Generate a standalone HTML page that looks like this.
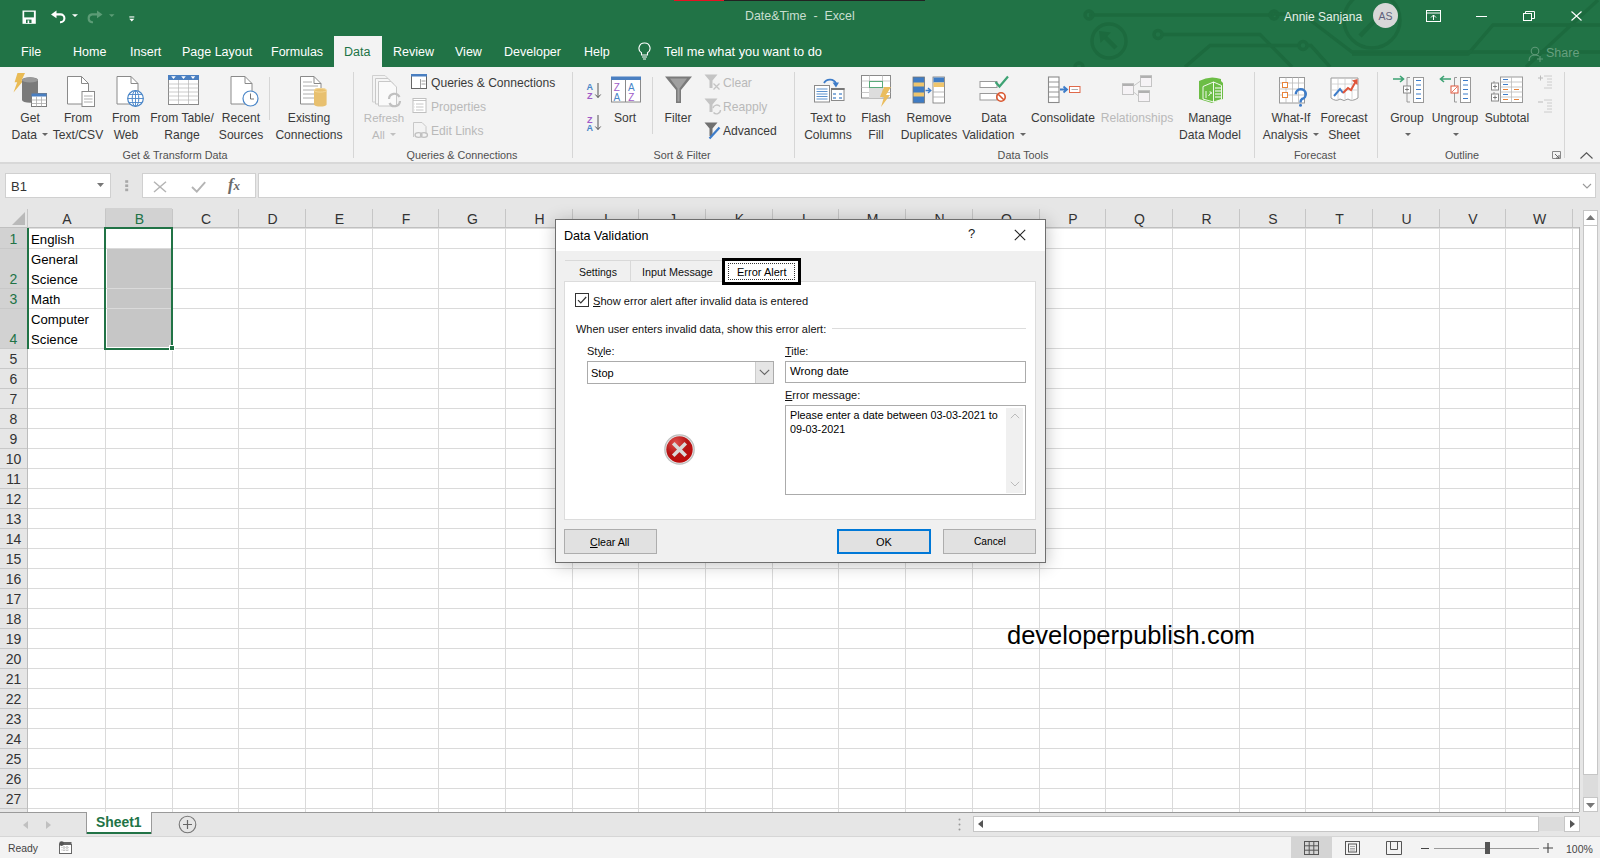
<!DOCTYPE html>
<html><head><meta charset="utf-8">
<style>
*{margin:0;padding:0;box-sizing:border-box}
html,body{width:1600px;height:858px;overflow:hidden;background:#fff;font-family:"Liberation Sans",sans-serif;position:relative}
.a{position:absolute}
#title{left:0;top:0;width:1600px;height:67px;background:#217346}
.tt{color:#fff;font-size:12.5px;white-space:nowrap;line-height:15px}
.rt{color:#3a3a3a;font-size:12.1px;white-space:nowrap;line-height:16.6px}
.rg{color:#b9b9b9}
.gl{color:#505050;font-size:10.8px;white-space:nowrap;line-height:14px}
.sep{width:1px;background:#d6d6d6}
.ch{font-size:14px;color:#333;text-align:center;line-height:20px}
.rh{font-size:14px;color:#333;text-align:right;line-height:20px}
.cell{font-size:13.2px;color:#000;line-height:20px}
.dt{font-family:"Liberation Sans",sans-serif;white-space:nowrap}
.dd{display:inline-block;width:0;height:0;border-left:3px solid transparent;border-right:3px solid transparent;border-top:3px solid #666;vertical-align:middle;margin-left:2px;position:relative;top:-1px}
.dd.g{border-top-color:#c0c0c0}
</style></head>
<body>
<!-- TITLE BAR -->
<div id="title" class="a">
<svg class="a" style="left:0;top:0" width="1600" height="67" viewBox="0 0 1600 67">
 <g stroke="#1c6a3e" stroke-width="3.4" fill="none">
  <line x1="1089" y1="15" x2="1274" y2="15"/><circle cx="1089" cy="15" r="4"/><circle cx="1274" cy="15" r="4"/>
  <circle cx="1109" cy="41" r="17"/><path d="M1103 35 L1116 48" stroke-width="4.5"/><path d="M1099 31 L1111 32.5 L1100.5 43z" fill="#1c6a3e" stroke="none"/>
  <path d="M1161 34.5 L1260 34.5 L1292 67"/><circle cx="1158" cy="34.5" r="4"/>
  <path d="M1185 67 L1210 45.5 L1300 45.5"/><circle cx="1303" cy="45.5" r="4"/>
  <path d="M1307 45.5 L1311 45.5 L1330 67"/>
  <circle cx="1079" cy="67" r="4"/>
  <path d="M1310 20 L1352 52 L1600 52"/>
  <circle cx="1372" cy="20" r="28"/><path d="M1360 36 L1381 14" stroke-width="4.5"/><path d="M1388 7 L1386 20 L1375 9z" fill="#1c6a3e" stroke="none"/>
  <path d="M1274 14 L1345 14" />
  <path d="M1600 25 L1493 25 L1468 54 L1352 54"/>
  <path d="M1598 0 L1526 67"/>
 </g>
</svg>
<div class="a" style="left:674px;top:0;width:50px;height:1px;background:#e81123"></div>
<div class="a" style="left:724px;top:0;width:201px;height:1px;background:#222"></div>
<!-- save -->
<svg class="a" style="left:22px;top:9.5px" width="15" height="15" viewBox="0 0 15 15"><path d="M0.5 0.5H13.8V13.8H0.5z" fill="#fff"/><rect x="2.2" y="1.8" width="9.7" height="5.6" fill="#217346"/><rect x="4" y="9.6" width="5.5" height="3.4" fill="#217346"/><rect x="5.6" y="10.4" width="1.6" height="3" fill="#fff"/></svg>
<!-- undo -->
<svg class="a" style="left:50px;top:9px" width="18" height="15" viewBox="0 0 18 15"><path d="M1 5.4L6.5 1.5V9.3z" fill="#fff"/><path d="M5.5 5.4H10.5A3.9 3.9 0 0 1 10.5 13.2H10" fill="none" stroke="#fff" stroke-width="2.1"/></svg>
<svg class="a" style="left:72px;top:14px" width="6" height="4"><path d="M0 0.3h6l-3 2.8z" fill="#fff"/></svg>
<svg class="a" style="left:86px;top:9px" width="18" height="15" viewBox="0 0 18 15"><path d="M16.5 5.4L11 1.5V9.3z" fill="#5c9c76"/><path d="M12 5.4H6A4 4 0 0 0 6 13.3H7" fill="none" stroke="#5c9c76" stroke-width="2.1"/></svg>
<svg class="a" style="left:108.5px;top:14px" width="6" height="4"><path d="M0 0.3h5.5l-2.75 2.8z" fill="#5c9c76"/></svg>
<svg class="a" style="left:128.5px;top:15.5px" width="6" height="6"><rect x="0.3" y="0.4" width="5" height="1.1" fill="#fff"/><path d="M0.3 2.7h5L2.8 5.6z" fill="#fff"/></svg>
<div class="a tt" style="left:745px;top:9px;font-size:12.4px;color:#c8dfd0">Date&amp;Time&nbsp; - &nbsp;Excel</div>
<div class="a tt" style="left:1284px;top:10px;font-size:12px;color:#e4efe8">Annie Sanjana</div>
<div class="a" style="left:1373px;top:3px;width:25px;height:25px;border-radius:50%;background:#d8d8d8;color:#5f5f7a;font-size:10.5px;line-height:27px;text-align:center">AS</div>
<svg class="a" style="left:1426px;top:10px" width="15" height="12" viewBox="0 0 15 12"><rect x="0.5" y="0.5" width="14" height="11" fill="none" stroke="#fff"/><line x1="0.5" y1="3" x2="14.5" y2="3" stroke="#fff"/><path d="M7.5 10 V5 M5 7.5 L7.5 5 L10 7.5" fill="none" stroke="#fff"/></svg>
<div class="a" style="left:1476px;top:16px;width:11px;height:1px;background:#fff"></div>
<svg class="a" style="left:1523px;top:11px" width="12" height="10" viewBox="0 0 12 10"><rect x="0.5" y="2.5" width="8" height="7" fill="none" stroke="#fff"/><path d="M2.5 2.5 V0.5 H11.5 V7.5 H8.5" fill="none" stroke="#fff"/></svg>
<svg class="a" style="left:1571px;top:11px" width="11" height="10" viewBox="0 0 11 10"><path d="M0.5 0.5 L10.5 9.5 M10.5 0.5 L0.5 9.5" stroke="#fff" stroke-width="1.1"/></svg>
<!-- tabs -->
<div class="a tt" style="left:21px;top:45px">File</div>
<div class="a tt" style="left:73px;top:45px">Home</div>
<div class="a tt" style="left:130px;top:45px">Insert</div>
<div class="a tt" style="left:182px;top:45px">Page Layout</div>
<div class="a tt" style="left:271px;top:45px">Formulas</div>
<div class="a" style="left:334px;top:36px;width:48px;height:32px;background:#f3f3f3"></div>
<div class="a tt" style="left:344px;top:45px;color:#217346">Data</div>
<div class="a tt" style="left:393px;top:45px">Review</div>
<div class="a tt" style="left:455px;top:45px">View</div>
<div class="a tt" style="left:504px;top:45px">Developer</div>
<div class="a tt" style="left:584px;top:45px">Help</div>
<svg class="a" style="left:638px;top:42px" width="13" height="18" viewBox="0 0 13 18"><path d="M6.5 1 A5.3 5.3 0 0 1 9.5 10.8 V13 H3.5 V10.8 A5.3 5.3 0 0 1 6.5 1z" fill="none" stroke="#fff" stroke-width="1.1"/><line x1="4" y1="15" x2="9" y2="15" stroke="#fff"/><line x1="5" y1="17" x2="8" y2="17" stroke="#fff"/></svg>
<div class="a tt" style="left:664px;top:44px;font-size:12.8px">Tell me what you want to do</div>
<svg class="a" style="left:1528px;top:46px" width="16" height="16" viewBox="0 0 16 16"><circle cx="7" cy="5" r="3.8" fill="none" stroke="#5f9a78" stroke-width="1.1"/><path d="M1 15 C1 10 4 9 7 9 C9 9 10 9.5 11 10" fill="none" stroke="#5f9a78" stroke-width="1.1"/><path d="M12 10 V16 M9 13 H15" stroke="#5f9a78" stroke-width="1.1"/></svg>
<div class="a tt" style="left:1546px;top:46px;color:#67a07f">Share</div>
</div>

<!-- RIBBON -->
<div class="a" style="left:0;top:67px;width:1600px;height:95px;background:#f3f3f3"></div>
<div class="a" style="left:0;top:162px;width:1600px;height:2px;background:#d8d8d8"></div>
<!-- separators -->
<div class="a sep" style="left:353px;top:72px;height:86px"></div>
<div class="a sep" style="left:572px;top:72px;height:86px"></div>
<div class="a sep" style="left:794px;top:72px;height:86px"></div>
<div class="a sep" style="left:1254px;top:72px;height:86px"></div>
<div class="a sep" style="left:1377px;top:72px;height:86px"></div>
<div class="a sep" style="left:1564px;top:72px;height:86px"></div>
<div class="a sep" style="left:269px;top:77px;height:43px"></div>
<div class="a sep" style="left:652px;top:77px;height:57px"></div>
<!-- labels -->
<div class="a rt" style="left:-10px;top:110px;width:80px;text-align:center">Get<br>Data <i class="dd"></i></div>
<div class="a rt" style="left:38px;top:110px;width:80px;text-align:center">From<br>Text/CSV</div>
<div class="a rt" style="left:86px;top:110px;width:80px;text-align:center">From<br>Web</div>
<div class="a rt" style="left:142px;top:110px;width:80px;text-align:center">From Table/<br>Range</div>
<div class="a rt" style="left:201px;top:110px;width:80px;text-align:center">Recent<br>Sources</div>
<div class="a rt" style="left:269px;top:110px;width:80px;text-align:center">Existing<br>Connections</div>
<div class="a rt rg" style="left:344px;top:110px;width:80px;text-align:center;font-size:11.5px">Refresh<br>All <i class="dd g"></i></div>
<div class="a rt" style="left:431px;top:75px">Queries &amp; Connections</div>
<div class="a rt rg" style="left:431px;top:99px">Properties</div>
<div class="a rt rg" style="left:431px;top:123px">Edit Links</div>
<div class="a rt" style="left:585px;top:110px;width:80px;text-align:center">Sort</div>
<div class="a rt" style="left:638px;top:110px;width:80px;text-align:center">Filter</div>
<div class="a rt rg" style="left:723px;top:75px">Clear</div>
<div class="a rt rg" style="left:723px;top:99px">Reapply</div>
<div class="a rt" style="left:723px;top:123px">Advanced</div>
<div class="a rt" style="left:788px;top:110px;width:80px;text-align:center">Text to<br>Columns</div>
<div class="a rt" style="left:836px;top:110px;width:80px;text-align:center">Flash<br>Fill</div>
<div class="a rt" style="left:889px;top:110px;width:80px;text-align:center">Remove<br>Duplicates</div>
<div class="a rt" style="left:954px;top:110px;width:80px;text-align:center">Data<br>Validation <i class="dd"></i></div>
<div class="a rt" style="left:1023px;top:110px;width:80px;text-align:center">Consolidate</div>
<div class="a rt rg" style="left:1097px;top:110px;width:80px;text-align:center">Relationships</div>
<div class="a rt" style="left:1170px;top:110px;width:80px;text-align:center">Manage<br>Data Model</div>
<div class="a rt" style="left:1251px;top:110px;width:80px;text-align:center">What-If<br>Analysis <i class="dd"></i></div>
<div class="a rt" style="left:1304px;top:110px;width:80px;text-align:center">Forecast<br>Sheet</div>
<div class="a rt" style="left:1367px;top:110px;width:80px;text-align:center">Group<br><i class="dd"></i></div>
<div class="a rt" style="left:1415px;top:110px;width:80px;text-align:center">Ungroup<br><i class="dd"></i></div>
<div class="a rt" style="left:1467px;top:110px;width:80px;text-align:center">Subtotal</div>
<!-- group labels -->
<div class="a gl" style="left:95px;top:148px;width:160px;text-align:center">Get &amp; Transform Data</div>
<div class="a gl" style="left:382px;top:148px;width:160px;text-align:center">Queries &amp; Connections</div>
<div class="a gl" style="left:602px;top:148px;width:160px;text-align:center">Sort &amp; Filter</div>
<div class="a gl" style="left:943px;top:148px;width:160px;text-align:center">Data Tools</div>
<div class="a gl" style="left:1235px;top:148px;width:160px;text-align:center">Forecast</div>
<div class="a gl" style="left:1382px;top:148px;width:160px;text-align:center">Outline</div>
<svg class="a" style="left:1552px;top:151px" width="9" height="8" viewBox="0 0 9 8"><path d="M0.5 7.5V0.5H8.5V7.5z" fill="none" stroke="#888" stroke-width="1"/><path d="M3 3L7 7M7 4V7H4" fill="none" stroke="#666"/></svg>
<svg class="a" style="left:1580px;top:152px" width="13" height="7" viewBox="0 0 13 7"><path d="M0.5 6.5L6.5 0.8L12.5 6.5" fill="none" stroke="#555" stroke-width="1.1"/></svg>

<!-- RIBBON ICONS -->
<svg class="a" style="left:0;top:67px" width="1600" height="80" viewBox="0 67 1600 80">
 <!-- Get Data -->
 <path d="M17.5 73H25L21.5 80.5H23.5L13.5 92.5L17.2 82.3H14.6z" fill="#e9bb55"/>
 <path d="M22 80 A8 2.8 0 0 1 38 80 V100 A8 2.8 0 0 1 22 100z" fill="#7a7a7a"/>
 <ellipse cx="30" cy="80" rx="8" ry="2.5" fill="#9a9a9a"/>
 <rect x="31.5" y="93.5" width="15" height="13" fill="#fff" stroke="#7a7a7a"/>
 <rect x="31.5" y="93.5" width="15" height="3" fill="#4a7fc1"/>
 <path d="M36.5 96.5V106.5M41.5 96.5V106.5M31.5 100H46.5M31.5 103.5H46.5" stroke="#aaa" stroke-width="0.8"/>
 <!-- From Text -->
 <path d="M67.5 76.5 H81.5 L88.5 83.5 V104 H67.5z" fill="#fff" stroke="#8a8a8a"/>
 <path d="M81.5 76.5 V83.5 H88.5" fill="none" stroke="#8a8a8a"/>
 <rect x="82" y="91.5" width="12.5" height="15" fill="#fff" stroke="#8a8a8a"/>
 <path d="M84 96H92.5M84 99H92.5M84 102H92.5" stroke="#999" stroke-width="0.8"/>
 <!-- From Web -->
 <path d="M117 76.5 H131 L138 83.5 V104 H117z" fill="#fff" stroke="#8a8a8a"/>
 <path d="M131 76.5 V83.5 H138" fill="none" stroke="#8a8a8a"/>
 <circle cx="135.5" cy="98.5" r="7.8" fill="#fff" stroke="#4a86c8" stroke-width="1.2"/>
 <ellipse cx="135.5" cy="98.5" rx="3.3" ry="7.8" fill="none" stroke="#4a86c8"/>
 <path d="M127.7 98.5H143.3M129 94.5H142M129 102.5H142M135.5 90.7V106.3" stroke="#4a86c8" stroke-width="0.9"/>
 <!-- From Table -->
 <rect x="168.5" y="75.5" width="30" height="29" fill="#fff" stroke="#8a8a8a"/>
 <rect x="168" y="75" width="31" height="5" fill="#4a7fc1"/>
 <path d="M171.2 76.3h4.6l-2.3 2.6z M181.2 76.3h4.6l-2.3 2.6z M190.7 76.3h4.6l-2.3 2.6z" fill="#fff"/>
 <path d="M178.5 80V104.5M188.5 80V104.5M168.5 84H198.5M168.5 88H198.5M168.5 92H198.5M168.5 96H198.5M168.5 100H198.5" stroke="#b4b4b4" stroke-width="0.7"/>
 <!-- Recent Sources -->
 <path d="M231 76.5 H245 L252 83.5 V104 H231z" fill="#fff" stroke="#8a8a8a"/>
 <path d="M245 76.5 V83.5 H252" fill="none" stroke="#8a8a8a"/>
 <circle cx="250.5" cy="98.5" r="7.5" fill="#fff" stroke="#4a86c8" stroke-width="1.2"/>
 <path d="M250.5 93.5V99H254" fill="none" stroke="#666" stroke-width="0.9"/>
 <!-- Existing Connections -->
 <path d="M300.5 76.5 H314 L321 83.5 V104 H300.5z" fill="#fff" stroke="#8a8a8a"/>
 <path d="M314 76.5 V83.5 H321" fill="none" stroke="#8a8a8a"/>
 <path d="M303 82H312M303 86H318M303 90H314M303 94H314M303 98H314" stroke="#999" stroke-width="0.8"/>
 <path d="M314 90 A6.3 2 0 0 1 326.6 90 V104.5 A6.3 2 0 0 1 314 104.5z" fill="#e8c06f"/><ellipse cx="320.3" cy="90.3" rx="6.3" ry="1.8" fill="none" stroke="#f6dca0" stroke-width="0.8"/>
 <!-- Refresh All -->
 <path d="M372.5 75.5H385L389 79.5V102H372.5z" fill="none" stroke="#d0d0d0"/>
 <path d="M375.5 78.5H388L393 83.5V104H375.5z" fill="#f6f6f6" stroke="#c8c8c8"/>
 <path d="M378.5 81.5H391L396.5 87V106H378.5z" fill="#fafafa" stroke="#c8c8c8"/>
 <path d="M389 99 A5.5 5.5 0 0 1 399.5 97 M400 101 A5.5 5.5 0 0 1 389.5 103" fill="none" stroke="#c0c0c0" stroke-width="2.2"/>
 <!-- Q&C icon -->
 <rect x="411.5" y="74.5" width="15" height="14" fill="#fff" stroke="#666"/>
 <rect x="411" y="74" width="16" height="2.5" fill="#4a7fc1"/>
 <path d="M420.5 79V88.5M421.5 81H425.5M421.5 84H425.5" stroke="#888" stroke-width="0.8"/>
 <!-- Properties -->
 <rect x="413" y="98.5" width="13" height="14" fill="#fff" stroke="#c0c0c0"/>
 <path d="M413 100.5H426M416 104H423.5M416 107H423.5M416 110H423.5M414.5 104H415M414.5 107H415M414.5 110H415" stroke="#c0c0c0" stroke-width="0.9"/>
 <!-- Edit Links -->
 <path d="M413.5 122.5H422L426 126.5V134" fill="none" stroke="#c8c8c8"/>
 <path d="M413.5 122.5V137" stroke="#c8c8c8"/>
 <ellipse cx="418.5" cy="135" rx="3.5" ry="2.3" fill="none" stroke="#c0c0c0" stroke-width="1.3"/>
 <ellipse cx="424" cy="135" rx="3.5" ry="2.3" fill="none" stroke="#c0c0c0" stroke-width="1.3"/>
 <!-- AZ sort -->
 <text x="586.5" y="90" font-family="Liberation Sans" font-size="9" font-weight="bold" fill="#4a86c8">A</text>
 <text x="587" y="98.5" font-family="Liberation Sans" font-size="9" font-weight="bold" fill="#a05cc8">Z</text>
 <path d="M598 83V97.5M595.3 94.5L598 97.5L600.7 94.5" fill="none" stroke="#555" stroke-width="1"/>
 <text x="587" y="122.5" font-family="Liberation Sans" font-size="9" font-weight="bold" fill="#a05cc8">Z</text>
 <text x="586.5" y="130.5" font-family="Liberation Sans" font-size="9" font-weight="bold" fill="#4a86c8">A</text>
 <path d="M598 115V129.5M595.3 126.5L598 129.5L600.7 126.5" fill="none" stroke="#555" stroke-width="1"/>
 <!-- Sort big -->
 <rect x="611.5" y="77.5" width="29" height="24.5" fill="#fff" stroke="#8a8a8a"/>
 <rect x="611" y="76.5" width="30" height="3.5" fill="#4a7fc1"/>
 <path d="M625.5 80V102" stroke="#8a8a8a"/>
 <text x="613.8" y="90.5" font-family="Liberation Sans" font-size="10" fill="#a05cc8">Z</text>
 <text x="613.5" y="100.5" font-family="Liberation Sans" font-size="10" fill="#4a86c8">A</text>
 <text x="628" y="90.5" font-family="Liberation Sans" font-size="10" fill="#4a86c8">A</text>
 <text x="628.3" y="100.5" font-family="Liberation Sans" font-size="10" fill="#a05cc8">Z</text>
 <!-- Filter -->
 <path d="M665 76.5H692L681 90V103H676V90z" fill="#7a7a7a"/>
 <path d="M670 78.5H687L679.5 88.5V101.5H677.5V88.5z" fill="#a0a0a0"/>
 <!-- Clear -->
 <path d="M704.5 74.5H717.5L712.5 80.5V88H709.5V80.5z" fill="#c4c4c4"/>
 <path d="M713.5 83.5L719.5 89.5M719.5 83.5L713.5 89.5" stroke="#c4c4c4" stroke-width="1.3"/>
 <!-- Reapply -->
 <path d="M704.5 98.5H717.5L712.5 104.5V112H709.5V104.5z" fill="#c4c4c4"/>
 <path d="M713 108A4 4 0 0 1 720 106.5M720.5 110A4 4 0 0 1 713.5 112.5" fill="none" stroke="#c4c4c4" stroke-width="1.4"/>
 <!-- Advanced -->
 <path d="M704.5 122.5H717.5L712.5 128.5V136H709.5V128.5z" fill="#707070"/>
 <path d="M709.5 138.5L719.5 127.5" stroke="#3d7cc9" stroke-width="2.2"/>
 <!-- Text to Columns -->
 <rect x="814.5" y="85.5" width="15" height="16.5" fill="#fff" stroke="#8a8a8a"/>
 <path d="M816.5 89H827.5M816.5 91.5H827.5M816.5 94H827.5M816.5 96.5H827.5M816.5 99H827.5" stroke="#4a86c8" stroke-width="0.9"/>
 <rect x="831.5" y="88.5" width="12.5" height="12" fill="#fff" stroke="#8a8a8a"/>
 <rect x="831" y="88" width="13.5" height="2" fill="#777"/>
 <path d="M833 93h3v2h-3zM839 93h3v2h-3zM833 97h3v2h-3zM839 97h3v2h-3z" fill="#8ab0dc"/>
 <path d="M824 83A6.5 6 0 0 1 836 83.5" fill="none" stroke="#3d7cc9" stroke-width="1.8"/>
 <path d="M832.5 82.5L836 87.5L839 82.5z" fill="#3d7cc9"/>
 <!-- Flash Fill -->
 <rect x="861.5" y="75.5" width="29" height="22.5" fill="#fff" stroke="#8a8a8a"/>
 <path d="M869.5 75.5V98M882.5 75.5V98M861.5 81H890.5M861.5 87.5H890.5M861.5 92.5H890.5" stroke="#bbb" stroke-width="0.8"/>
 <rect x="869" y="88" width="13.5" height="10" fill="#ddd"/>
 <rect x="869.5" y="81.5" width="13" height="6" fill="#fff" stroke="#5aaa7a"/>
 <path d="M884 87H891L886 95H890L881 107L884 97H880z" fill="#eabd5e"/>
 <!-- Remove Duplicates -->
 <rect x="913" y="77" width="11.5" height="26" fill="#3f7cc4" stroke="#777" stroke-width="0.8"/>
 <rect x="913.5" y="82.5" width="10.5" height="4" fill="#efc56c"/>
 <rect x="913.5" y="92.5" width="10.5" height="4" fill="#efc56c"/>
 <path d="M925.5 90.5H930M928 88L930.8 90.5L928 93" fill="none" stroke="#3d7cc9" stroke-width="1.4"/>
 <rect x="933" y="77" width="11.5" height="26" fill="#fff" stroke="#777" stroke-width="0.8"/>
 <rect x="933.5" y="77.5" width="10.5" height="5" fill="#3f7cc4"/>
 <rect x="933.5" y="82.5" width="10.5" height="4.5" fill="#efc56c"/>
 <path d="M933 92H944.5M933 97H944.5" stroke="#aaa" stroke-width="0.8"/>
 <!-- Data Validation -->
 <rect x="980" y="81.5" width="17" height="6" fill="#fff" stroke="#999"/>
 <rect x="980" y="93.5" width="17" height="6.5" fill="#fff" stroke="#999"/>
 <path d="M995.5 82L999.5 86.5L1008 76.5" fill="none" stroke="#3ea374" stroke-width="2.2"/>
 <circle cx="1001" cy="97" r="4.2" fill="#fff" stroke="#d9552d" stroke-width="1.6"/>
 <path d="M998.2 94.2L1003.8 99.8" stroke="#d9552d" stroke-width="1.6"/>
 <!-- Consolidate -->
 <rect x="1048.5" y="77" width="10.5" height="25.5" fill="#fff" stroke="#8a8a8a" stroke-width="1.1"/>
 <path d="M1048.5 82H1059M1048.5 87H1059M1048.5 92H1059M1048.5 97H1059" stroke="#8a8a8a" stroke-width="0.9"/>
 <path d="M1060 89.5H1066M1063.5 86.5L1067 89.5L1063.5 92.5" fill="none" stroke="#3d7cc9" stroke-width="1.8"/>
 <rect x="1069.5" y="86.5" width="10.5" height="6" fill="#fff" stroke="#e0694a"/>
 <path d="M1071.5 89.5H1078" stroke="#999" stroke-width="0.8"/>
 <!-- Relationships -->
 <g fill="#f6f3f6" stroke="#c4c4c4">
 <rect x="1122.5" y="83.5" width="11" height="11"/><rect x="1140.5" y="75.5" width="11" height="11"/><rect x="1138.5" y="90.5" width="11" height="11"/>
 </g>
 <path d="M1122.5 85H1133.5M1140.5 77H1151.5M1138.5 92H1149.5" stroke="#b0b0b0" stroke-width="2"/>
 <path d="M1133.5 86L1140.5 81M1133.5 92L1138.5 96" stroke="#c8c8c8"/>
 <!-- Manage Data Model -->
 <path d="M1199 81 Q1210 75 1221 79 V81 L1223 83 V99 L1212 103 L1199 99z" fill="#6cbd45"/>
 <path d="M1203 86.5L1213.5 82L1221.5 85.5V99.5L1213.5 102L1203 99z" fill="none" stroke="#fff" stroke-width="0.9"/>
 <path d="M1213.5 82V102" stroke="#fff" stroke-width="0.9"/>
 <path d="M1215 88H1221M1215 91H1221M1215 94H1221M1215 97H1221" stroke="#fff" stroke-width="1.1"/>
 <path d="M1206 98V91M1208.5 96L1211 92.5M1209.5 91.8L1211.3 92.3L1211.2 94" fill="none" stroke="#fff" stroke-width="0.9"/>
 <!-- What-If -->
 <rect x="1279.5" y="77.5" width="25" height="25.5" fill="#fff" stroke="#999"/>
 <path d="M1286 77.5V103M1292.5 77.5V103M1298.5 77.5V103M1279.5 83H1304.5M1279.5 89H1304.5M1279.5 95H1304.5" stroke="#bbb" stroke-width="0.8"/>
 <rect x="1282.5" y="82.5" width="5" height="5" fill="#fff" stroke="#e8843c"/>
 <rect x="1282.5" y="92.5" width="5" height="5" fill="#fff" stroke="#e8843c"/>
 <path d="M1295.8 94.2A5 5 0 1 1 1302 99Q1300.5 100 1300.5 102.5" fill="none" stroke="#3d7cc9" stroke-width="2.5"/>
 <circle cx="1300.5" cy="105.3" r="1.5" fill="#3d7cc9"/>
 <!-- Forecast Sheet -->
 <path d="M1331 78H1358V98Q1352 102 1348 99Q1344 102 1340 99Q1336 102 1331 98z" fill="#fff" stroke="#999"/>
 <path d="M1338 78V99M1345 78V99M1352 78V99M1331 84H1358M1331 90H1358" stroke="#ccc" stroke-width="0.8"/>
 <path d="M1334 96L1340 89L1343 93" fill="none" stroke="#3d7cc9" stroke-width="2"/>
 <path d="M1343 93L1348 88L1351 90L1356 81" fill="none" stroke="#e0553a" stroke-width="2"/>
 <path d="M1352 80.5L1357.5 79L1357.5 85z" fill="#e0553a"/>
 <!-- Group -->
 <path d="M1393 79H1403M1400 76L1403.5 79L1400 82" fill="none" stroke="#3ea374" stroke-width="1.6"/>
 <path d="M1410 77.5H1407V102H1410" fill="none" stroke="#999"/>
 <rect x="1403.5" y="86" width="7" height="7" fill="#fff" stroke="#888"/>
 <path d="M1405 89.5H1409M1407 87.5V91.5" stroke="#666" stroke-width="0.8"/>
 <rect x="1413.5" y="77.5" width="10" height="25" fill="#fff" stroke="#999"/>
 <path d="M1416 80.5H1421M1416 85H1421M1416 89.5H1421M1416 94H1421M1416 98.5H1421" stroke="#3d7cc9" stroke-width="1"/>
 <!-- Ungroup -->
 <path d="M1451 79H1441M1444 76L1440.5 79L1444 82" fill="none" stroke="#3ea374" stroke-width="1.6"/>
 <path d="M1457 77.5H1454.5V102H1457" fill="none" stroke="#999"/>
 <rect x="1451" y="86" width="7" height="7" fill="#fff" stroke="#e0553a"/>
 <path d="M1452 92L1457 87" stroke="#e0553a" stroke-width="0.8"/>
 <rect x="1460.5" y="77.5" width="10" height="25" fill="#fff" stroke="#999"/>
 <path d="M1463 80.5H1468M1463 85H1468M1463 89.5H1468M1463 94H1468M1463 98.5H1468" stroke="#3d7cc9" stroke-width="1"/>
 <!-- Subtotal -->
 <rect x="1500.5" y="77" width="22" height="25.5" fill="#fff" stroke="#999"/>
 <path d="M1511.5 77V102.5M1500.5 82H1522.5M1500.5 87H1522.5M1500.5 92H1522.5M1500.5 97H1522.5" stroke="#bbb" stroke-width="0.8"/>
 <path d="M1494 81V89M1494 92V101" fill="none" stroke="#999"/>
 <rect x="1491.5" y="83" width="7" height="7" fill="#fff" stroke="#888"/>
 <rect x="1491.5" y="94" width="7" height="7" fill="#fff" stroke="#888"/>
 <path d="M1493 86.5H1497M1495 84.5V88.5M1493 97.5H1497M1495 95.5V99.5" stroke="#666" stroke-width="0.8"/>
 <path d="M1503 79.5H1508M1503 84.5H1508M1503 94.5H1508" stroke="#3d7cc9" stroke-width="1"/>
 <path d="M1503 89.5H1508M1514 89.5H1519M1503 99.5H1508M1514 99.5H1519" stroke="#e8843c" stroke-width="1"/>
 <!-- Show/Hide Detail -->
 <path d="M1538 78H1543M1540.5 75.5V80.5" stroke="#bbb" stroke-width="1"/>
 <path d="M1544 76H1552M1547 79H1552M1547 82H1552M1547 85H1552M1544 88H1552" stroke="#c8c8c8" stroke-width="0.9"/>
 <path d="M1538 102H1543" stroke="#bbb" stroke-width="1"/>
 <path d="M1544 100H1552M1547 103H1552M1547 106H1552M1547 109H1552M1544 112H1552" stroke="#c8c8c8" stroke-width="0.9"/>
</svg>

<!-- FORMULA BAR -->
<div class="a" style="left:0;top:164px;width:1600px;height:44px;background:#e6e6e6"></div>
<div class="a" style="left:5px;top:173px;width:106px;height:25px;background:#fff;border:1px solid #d0d0d0"></div>
<div class="a" style="left:11px;top:179px;font-size:13px;color:#333;line-height:16px">B1</div>
<svg class="a" style="left:97px;top:183px" width="7" height="4"><path d="M0 0h7l-3.5 4z" fill="#777"/></svg>
<svg class="a" style="left:125px;top:180px" width="4" height="12"><rect x="0.2" y="0.2" width="3" height="2.6" fill="#a8a8a8"/><rect x="0.2" y="4.4" width="3" height="2.6" fill="#a8a8a8"/><rect x="0.2" y="8.6" width="3" height="2.6" fill="#a8a8a8"/></svg>
<div class="a" style="left:142px;top:173px;width:114px;height:25px;background:#fff;border:1px solid #d0d0d0"></div>
<svg class="a" style="left:153px;top:180.5px" width="14" height="12"><path d="M1 0.8L13 11M13 0.8L1 11" stroke="#b4b4b4" stroke-width="1.5"/></svg>
<svg class="a" style="left:191px;top:180.5px" width="15" height="12"><path d="M1 6L5.8 10.6L14.2 1.2" fill="none" stroke="#b4b4b4" stroke-width="1.9"/></svg>
<div class="a" style="left:228px;top:176px;font-family:'Liberation Serif',serif;font-style:italic;font-weight:bold;font-size:16.5px;color:#6a6a6a;line-height:18px">f<span style="font-size:13px">x</span></div>
<div class="a" style="left:258px;top:173px;width:1338px;height:25px;background:#fff;border:1px solid #d0d0d0"></div>
<svg class="a" style="left:1582px;top:183px" width="10" height="6"><path d="M1 1L5 5L9 1" fill="none" stroke="#999" stroke-width="1.1"/></svg>
<!-- GRID -->
<div class="a" style="left:0;top:208px;width:1579px;height:20px;background:#e6e6e6"></div>
<div class="a" style="left:0;top:228px;width:27px;height:584px;background:#e6e6e6"></div>
<div class="a" style="left:105px;top:208px;width:67px;height:19px;background:#d2d2d2"></div>
<div class="a" style="left:0;top:228px;width:27px;height:121px;background:#d2d2d2"></div>
<div class="a" style="left:107px;top:249px;width:64px;height:98px;background:#c6c6c6"></div>
<svg class="a" style="left:0;top:208px" width="1579" height="604" viewBox="0 208 1579 604">
<path d="M12 225H25V212z" fill="#b9b9b9"/>
<line x1="27.5" y1="209" x2="27.5" y2="227" stroke="#c6c6c6"/>
<line x1="105.5" y1="209" x2="105.5" y2="227" stroke="#c6c6c6"/>
<line x1="172.5" y1="209" x2="172.5" y2="227" stroke="#c6c6c6"/>
<line x1="238.5" y1="209" x2="238.5" y2="227" stroke="#c6c6c6"/>
<line x1="305.5" y1="209" x2="305.5" y2="227" stroke="#c6c6c6"/>
<line x1="372.5" y1="209" x2="372.5" y2="227" stroke="#c6c6c6"/>
<line x1="438.5" y1="209" x2="438.5" y2="227" stroke="#c6c6c6"/>
<line x1="505.5" y1="209" x2="505.5" y2="227" stroke="#c6c6c6"/>
<line x1="572.5" y1="209" x2="572.5" y2="227" stroke="#c6c6c6"/>
<line x1="638.5" y1="209" x2="638.5" y2="227" stroke="#c6c6c6"/>
<line x1="705.5" y1="209" x2="705.5" y2="227" stroke="#c6c6c6"/>
<line x1="772.5" y1="209" x2="772.5" y2="227" stroke="#c6c6c6"/>
<line x1="838.5" y1="209" x2="838.5" y2="227" stroke="#c6c6c6"/>
<line x1="905.5" y1="209" x2="905.5" y2="227" stroke="#c6c6c6"/>
<line x1="972.5" y1="209" x2="972.5" y2="227" stroke="#c6c6c6"/>
<line x1="1039.5" y1="209" x2="1039.5" y2="227" stroke="#c6c6c6"/>
<line x1="1105.5" y1="209" x2="1105.5" y2="227" stroke="#c6c6c6"/>
<line x1="1172.5" y1="209" x2="1172.5" y2="227" stroke="#c6c6c6"/>
<line x1="1239.5" y1="209" x2="1239.5" y2="227" stroke="#c6c6c6"/>
<line x1="1305.5" y1="209" x2="1305.5" y2="227" stroke="#c6c6c6"/>
<line x1="1372.5" y1="209" x2="1372.5" y2="227" stroke="#c6c6c6"/>
<line x1="1439.5" y1="209" x2="1439.5" y2="227" stroke="#c6c6c6"/>
<line x1="1505.5" y1="209" x2="1505.5" y2="227" stroke="#c6c6c6"/>
<line x1="1572.5" y1="209" x2="1572.5" y2="227" stroke="#c6c6c6"/>
<line x1="0" y1="227.5" x2="1579" y2="227.5" stroke="#c0c0c0"/><line x1="28" y1="228.5" x2="1579" y2="228.5" stroke="#dedede"/>
<line x1="27.5" y1="228" x2="27.5" y2="812" stroke="#bdbdbd"/>
<line x1="0" y1="248.5" x2="27" y2="248.5" stroke="#c8c8c8"/>
<line x1="28" y1="248.5" x2="1579" y2="248.5" stroke="#dadada"/>
<line x1="0" y1="288.5" x2="27" y2="288.5" stroke="#c8c8c8"/>
<line x1="28" y1="288.5" x2="1579" y2="288.5" stroke="#dadada"/>
<line x1="0" y1="308.5" x2="27" y2="308.5" stroke="#c8c8c8"/>
<line x1="28" y1="308.5" x2="1579" y2="308.5" stroke="#dadada"/>
<line x1="0" y1="348.5" x2="27" y2="348.5" stroke="#c8c8c8"/>
<line x1="28" y1="348.5" x2="1579" y2="348.5" stroke="#dadada"/>
<line x1="0" y1="368.5" x2="27" y2="368.5" stroke="#c8c8c8"/>
<line x1="28" y1="368.5" x2="1579" y2="368.5" stroke="#dadada"/>
<line x1="0" y1="388.5" x2="27" y2="388.5" stroke="#c8c8c8"/>
<line x1="28" y1="388.5" x2="1579" y2="388.5" stroke="#dadada"/>
<line x1="0" y1="408.5" x2="27" y2="408.5" stroke="#c8c8c8"/>
<line x1="28" y1="408.5" x2="1579" y2="408.5" stroke="#dadada"/>
<line x1="0" y1="428.5" x2="27" y2="428.5" stroke="#c8c8c8"/>
<line x1="28" y1="428.5" x2="1579" y2="428.5" stroke="#dadada"/>
<line x1="0" y1="448.5" x2="27" y2="448.5" stroke="#c8c8c8"/>
<line x1="28" y1="448.5" x2="1579" y2="448.5" stroke="#dadada"/>
<line x1="0" y1="468.5" x2="27" y2="468.5" stroke="#c8c8c8"/>
<line x1="28" y1="468.5" x2="1579" y2="468.5" stroke="#dadada"/>
<line x1="0" y1="488.5" x2="27" y2="488.5" stroke="#c8c8c8"/>
<line x1="28" y1="488.5" x2="1579" y2="488.5" stroke="#dadada"/>
<line x1="0" y1="508.5" x2="27" y2="508.5" stroke="#c8c8c8"/>
<line x1="28" y1="508.5" x2="1579" y2="508.5" stroke="#dadada"/>
<line x1="0" y1="528.5" x2="27" y2="528.5" stroke="#c8c8c8"/>
<line x1="28" y1="528.5" x2="1579" y2="528.5" stroke="#dadada"/>
<line x1="0" y1="548.5" x2="27" y2="548.5" stroke="#c8c8c8"/>
<line x1="28" y1="548.5" x2="1579" y2="548.5" stroke="#dadada"/>
<line x1="0" y1="568.5" x2="27" y2="568.5" stroke="#c8c8c8"/>
<line x1="28" y1="568.5" x2="1579" y2="568.5" stroke="#dadada"/>
<line x1="0" y1="588.5" x2="27" y2="588.5" stroke="#c8c8c8"/>
<line x1="28" y1="588.5" x2="1579" y2="588.5" stroke="#dadada"/>
<line x1="0" y1="608.5" x2="27" y2="608.5" stroke="#c8c8c8"/>
<line x1="28" y1="608.5" x2="1579" y2="608.5" stroke="#dadada"/>
<line x1="0" y1="628.5" x2="27" y2="628.5" stroke="#c8c8c8"/>
<line x1="28" y1="628.5" x2="1579" y2="628.5" stroke="#dadada"/>
<line x1="0" y1="648.5" x2="27" y2="648.5" stroke="#c8c8c8"/>
<line x1="28" y1="648.5" x2="1579" y2="648.5" stroke="#dadada"/>
<line x1="0" y1="668.5" x2="27" y2="668.5" stroke="#c8c8c8"/>
<line x1="28" y1="668.5" x2="1579" y2="668.5" stroke="#dadada"/>
<line x1="0" y1="688.5" x2="27" y2="688.5" stroke="#c8c8c8"/>
<line x1="28" y1="688.5" x2="1579" y2="688.5" stroke="#dadada"/>
<line x1="0" y1="708.5" x2="27" y2="708.5" stroke="#c8c8c8"/>
<line x1="28" y1="708.5" x2="1579" y2="708.5" stroke="#dadada"/>
<line x1="0" y1="728.5" x2="27" y2="728.5" stroke="#c8c8c8"/>
<line x1="28" y1="728.5" x2="1579" y2="728.5" stroke="#dadada"/>
<line x1="0" y1="748.5" x2="27" y2="748.5" stroke="#c8c8c8"/>
<line x1="28" y1="748.5" x2="1579" y2="748.5" stroke="#dadada"/>
<line x1="0" y1="768.5" x2="27" y2="768.5" stroke="#c8c8c8"/>
<line x1="28" y1="768.5" x2="1579" y2="768.5" stroke="#dadada"/>
<line x1="0" y1="788.5" x2="27" y2="788.5" stroke="#c8c8c8"/>
<line x1="28" y1="788.5" x2="1579" y2="788.5" stroke="#dadada"/>
<line x1="0" y1="808.5" x2="27" y2="808.5" stroke="#c8c8c8"/>
<line x1="28" y1="808.5" x2="1579" y2="808.5" stroke="#dadada"/>
<line x1="105.5" y1="228" x2="105.5" y2="812" stroke="#dadada"/>
<line x1="172.5" y1="228" x2="172.5" y2="812" stroke="#dadada"/>
<line x1="238.5" y1="228" x2="238.5" y2="812" stroke="#dadada"/>
<line x1="305.5" y1="228" x2="305.5" y2="812" stroke="#dadada"/>
<line x1="372.5" y1="228" x2="372.5" y2="812" stroke="#dadada"/>
<line x1="438.5" y1="228" x2="438.5" y2="812" stroke="#dadada"/>
<line x1="505.5" y1="228" x2="505.5" y2="812" stroke="#dadada"/>
<line x1="572.5" y1="228" x2="572.5" y2="812" stroke="#dadada"/>
<line x1="638.5" y1="228" x2="638.5" y2="812" stroke="#dadada"/>
<line x1="705.5" y1="228" x2="705.5" y2="812" stroke="#dadada"/>
<line x1="772.5" y1="228" x2="772.5" y2="812" stroke="#dadada"/>
<line x1="838.5" y1="228" x2="838.5" y2="812" stroke="#dadada"/>
<line x1="905.5" y1="228" x2="905.5" y2="812" stroke="#dadada"/>
<line x1="972.5" y1="228" x2="972.5" y2="812" stroke="#dadada"/>
<line x1="1039.5" y1="228" x2="1039.5" y2="812" stroke="#dadada"/>
<line x1="1105.5" y1="228" x2="1105.5" y2="812" stroke="#dadada"/>
<line x1="1172.5" y1="228" x2="1172.5" y2="812" stroke="#dadada"/>
<line x1="1239.5" y1="228" x2="1239.5" y2="812" stroke="#dadada"/>
<line x1="1305.5" y1="228" x2="1305.5" y2="812" stroke="#dadada"/>
<line x1="1372.5" y1="228" x2="1372.5" y2="812" stroke="#dadada"/>
<line x1="1439.5" y1="228" x2="1439.5" y2="812" stroke="#dadada"/>
<line x1="1505.5" y1="228" x2="1505.5" y2="812" stroke="#dadada"/>
<line x1="1572.5" y1="228" x2="1572.5" y2="812" stroke="#dadada"/>
</svg>
<div class="a ch" style="left:28px;top:209px;width:78px">A</div>
<div class="a ch" style="left:106px;top:209px;width:67px;color:#217346;">B</div>
<div class="a ch" style="left:173px;top:209px;width:66px;">C</div>
<div class="a ch" style="left:239px;top:209px;width:67px;">D</div>
<div class="a ch" style="left:306px;top:209px;width:67px;">E</div>
<div class="a ch" style="left:373px;top:209px;width:66px;">F</div>
<div class="a ch" style="left:439px;top:209px;width:67px;">G</div>
<div class="a ch" style="left:506px;top:209px;width:67px;">H</div>
<div class="a ch" style="left:573px;top:209px;width:66px;">I</div>
<div class="a ch" style="left:639px;top:209px;width:67px;">J</div>
<div class="a ch" style="left:706px;top:209px;width:67px;">K</div>
<div class="a ch" style="left:773px;top:209px;width:66px;">L</div>
<div class="a ch" style="left:839px;top:209px;width:67px;">M</div>
<div class="a ch" style="left:906px;top:209px;width:67px;">N</div>
<div class="a ch" style="left:973px;top:209px;width:67px;">O</div>
<div class="a ch" style="left:1040px;top:209px;width:66px;">P</div>
<div class="a ch" style="left:1106px;top:209px;width:67px;">Q</div>
<div class="a ch" style="left:1173px;top:209px;width:67px;">R</div>
<div class="a ch" style="left:1240px;top:209px;width:66px;">S</div>
<div class="a ch" style="left:1306px;top:209px;width:67px;">T</div>
<div class="a ch" style="left:1373px;top:209px;width:67px;">U</div>
<div class="a ch" style="left:1440px;top:209px;width:66px;">V</div>
<div class="a ch" style="left:1506px;top:209px;width:67px;">W</div>
<div class="a rh" style="left:0;top:229px;width:27px;text-align:center;color:#217346;">1</div>
<div class="a rh" style="left:0;top:269px;width:27px;text-align:center;color:#217346;">2</div>
<div class="a rh" style="left:0;top:289px;width:27px;text-align:center;color:#217346;">3</div>
<div class="a rh" style="left:0;top:329px;width:27px;text-align:center;color:#217346;">4</div>
<div class="a rh" style="left:0;top:349px;width:27px;text-align:center;">5</div>
<div class="a rh" style="left:0;top:369px;width:27px;text-align:center;">6</div>
<div class="a rh" style="left:0;top:389px;width:27px;text-align:center;">7</div>
<div class="a rh" style="left:0;top:409px;width:27px;text-align:center;">8</div>
<div class="a rh" style="left:0;top:429px;width:27px;text-align:center;">9</div>
<div class="a rh" style="left:0;top:449px;width:27px;text-align:center;">10</div>
<div class="a rh" style="left:0;top:469px;width:27px;text-align:center;">11</div>
<div class="a rh" style="left:0;top:489px;width:27px;text-align:center;">12</div>
<div class="a rh" style="left:0;top:509px;width:27px;text-align:center;">13</div>
<div class="a rh" style="left:0;top:529px;width:27px;text-align:center;">14</div>
<div class="a rh" style="left:0;top:549px;width:27px;text-align:center;">15</div>
<div class="a rh" style="left:0;top:569px;width:27px;text-align:center;">16</div>
<div class="a rh" style="left:0;top:589px;width:27px;text-align:center;">17</div>
<div class="a rh" style="left:0;top:609px;width:27px;text-align:center;">18</div>
<div class="a rh" style="left:0;top:629px;width:27px;text-align:center;">19</div>
<div class="a rh" style="left:0;top:649px;width:27px;text-align:center;">20</div>
<div class="a rh" style="left:0;top:669px;width:27px;text-align:center;">21</div>
<div class="a rh" style="left:0;top:689px;width:27px;text-align:center;">22</div>
<div class="a rh" style="left:0;top:709px;width:27px;text-align:center;">23</div>
<div class="a rh" style="left:0;top:729px;width:27px;text-align:center;">24</div>
<div class="a rh" style="left:0;top:749px;width:27px;text-align:center;">25</div>
<div class="a rh" style="left:0;top:769px;width:27px;text-align:center;">26</div>
<div class="a rh" style="left:0;top:789px;width:27px;text-align:center;">27</div>
<div class="a" style="left:27px;top:228px;width:2px;height:121px;background:#217346"></div>
<div class="a" style="left:105px;top:227px;width:2px;height:2px;background:#217346"></div>
<div class="a" style="left:104px;top:227px;width:69px;height:123px;border:2px solid #217346"></div>
<div class="a" style="left:169px;top:345px;width:6px;height:6px;background:#217346;border:1px solid #fff"></div>
<div class="a cell" style="left:31px;top:229.5px">English</div>
<div class="a cell" style="left:31px;top:249.5px">General</div>
<div class="a cell" style="left:31px;top:269.5px">Science</div>
<div class="a cell" style="left:31px;top:289.5px">Math</div>
<div class="a cell" style="left:31px;top:309.5px">Computer</div>
<div class="a cell" style="left:31px;top:329.5px">Science</div>
<div class="a" style="left:1007px;top:620px;font-size:25.5px;color:#000;line-height:30px;white-space:nowrap">developerpublish.com</div>
<!-- VERTICAL SCROLLBAR -->
<div class="a" style="left:1579px;top:208px;width:21px;height:604px;background:#e6e6e6"></div>
<div class="a" style="left:1579px;top:227px;width:1px;height:585px;background:#b0b0b0"></div>
<div class="a" style="left:1583px;top:210px;width:15px;height:16px;background:#fff;border:1px solid #c6c6c6"></div>
<svg class="a" style="left:1586px;top:215px" width="9" height="5"><path d="M0 5h9L4.5 0z" fill="#777"/></svg>
<div class="a" style="left:1583px;top:226px;width:15px;height:549px;background:#fff;border:1px solid #c6c6c6;border-top:none"></div>
<div class="a" style="left:1583px;top:775px;width:15px;height:22px;background:#dcdcdc"></div>
<div class="a" style="left:1583px;top:797px;width:15px;height:15px;background:#fff;border:1px solid #c6c6c6"></div>
<svg class="a" style="left:1586px;top:803px" width="9" height="5"><path d="M0 0h9L4.5 5z" fill="#777"/></svg>
<!-- SHEET TAB BAR -->
<div class="a" style="left:0;top:812px;width:1600px;height:24px;background:#e6e6e6"></div>
<div class="a" style="left:0;top:812px;width:1579px;height:1px;background:#9a9a9a"></div>
<svg class="a" style="left:23px;top:821px" width="6" height="8"><path d="M5 0V8L0 4z" fill="#c0c0c0"/></svg>
<svg class="a" style="left:46px;top:821px" width="6" height="8"><path d="M0 0V8L5 4z" fill="#c0c0c0"/></svg>
<div class="a" style="left:86px;top:812px;width:66px;height:22px;background:#fff;border-left:1px solid #9a9a9a;border-right:1px solid #9a9a9a"></div>
<div class="a" style="left:87px;top:832px;width:64px;height:2px;background:#217346"></div>
<div class="a" style="left:96px;top:814px;font-size:13.9px;font-weight:bold;color:#217346;line-height:17px">Sheet1</div>
<svg class="a" style="left:178px;top:815px" width="19" height="19"><circle cx="9.5" cy="9.5" r="8.3" fill="none" stroke="#777" stroke-width="1.1"/><path d="M9.5 5V14M5 9.5H14" stroke="#666" stroke-width="1.2"/></svg>
<svg class="a" style="left:958px;top:818px" width="3" height="14"><circle cx="1.5" cy="1.5" r="1" fill="#999"/><circle cx="1.5" cy="6.5" r="1" fill="#999"/><circle cx="1.5" cy="11.5" r="1" fill="#999"/></svg>
<div class="a" style="left:973px;top:816px;width:16px;height:16px;background:#fff;border:1px solid #c6c6c6"></div>
<svg class="a" style="left:978px;top:820px" width="5" height="8"><path d="M5 0V8L0 4z" fill="#555"/></svg>
<div class="a" style="left:988px;top:816px;width:551px;height:16px;background:#fff;border:1px solid #c6c6c6;border-left:none"></div>
<div class="a" style="left:1539px;top:817px;width:26px;height:14px;background:#dcdcdc"></div>
<div class="a" style="left:1564px;top:816px;width:16px;height:16px;background:#fff;border:1px solid #c6c6c6"></div>
<svg class="a" style="left:1570px;top:820px" width="5" height="8"><path d="M0 0V8L5 4z" fill="#555"/></svg>
<!-- STATUS BAR -->
<div class="a" style="left:0;top:836px;width:1600px;height:22px;background:#f3f3f3;border-top:1px solid #d6d6d6"></div>
<div class="a" style="left:8px;top:842px;font-size:10.4px;color:#444;line-height:14px">Ready</div>
<svg class="a" style="left:59px;top:841px" width="13" height="13" viewBox="0 0 13 13"><rect x="0.5" y="3.5" width="12" height="9" fill="#fff" stroke="#666"/><rect x="4" y="1" width="8.5" height="2.5" fill="#666"/><circle cx="2.6" cy="2.6" r="2.4" fill="#555"/><path d="M2.5 6.5h8M2.5 9h8M5 5v6M8 5v6" stroke="#888" stroke-width="0.7" stroke-dasharray="1 1"/></svg>
<div class="a" style="left:1291px;top:837px;width:41px;height:21px;background:#d4d4d4"></div>
<svg class="a" style="left:1304px;top:841px" width="15" height="14" viewBox="0 0 15 14"><rect x="0.5" y="0.5" width="14" height="13" fill="none" stroke="#555"/><path d="M5.2 0.5V13.5M9.8 0.5V13.5M0.5 4.8H14.5M0.5 9.2H14.5" stroke="#555"/></svg>
<svg class="a" style="left:1345px;top:841px" width="15" height="14" viewBox="0 0 15 14"><rect x="0.5" y="0.5" width="14" height="13" fill="none" stroke="#555"/><rect x="3.5" y="3" width="8" height="8" fill="none" stroke="#555"/><path d="M5 5.5H10M5 7.5H10M5 9H10" stroke="#777" stroke-width="0.6"/></svg>
<svg class="a" style="left:1386px;top:841px" width="16" height="14" viewBox="0 0 16 14"><path d="M0.5 13.5V0.5H15.5V13.5z" fill="none" stroke="#555"/><path d="M4.5 0.5V8.5H11.5V0.5" fill="none" stroke="#555"/></svg>
<div class="a" style="left:1421px;top:848px;width:8px;height:1px;background:#444"></div>
<div class="a" style="left:1434px;top:848px;width:105px;height:1px;background:#9a9a9a"></div>
<div class="a" style="left:1485px;top:842px;width:5px;height:12px;background:#555"></div>
<svg class="a" style="left:1543px;top:843px" width="10" height="10"><path d="M5 0V10M0 5H10" stroke="#444" stroke-width="1.1"/></svg>
<div class="a" style="left:1566px;top:843px;font-size:10.5px;color:#444;line-height:13px">100%</div>

<!-- DIALOG -->
<div class="a" style="left:555px;top:219px;width:491px;height:344px;background:#f0f0f0;border:1px solid #6f6f6f;box-shadow:1px 2px 16px rgba(0,0,0,0.24)"></div>
<div class="a" style="left:556px;top:220px;width:489px;height:31px;background:#fff"></div>
<div class="a dt" style="left:564px;top:228px;font-size:12.6px;line-height:16px;color:#000">Data Validation</div>
<div class="a dt" style="left:968px;top:226px;font-size:13px;line-height:16px;color:#222">?</div>
<svg class="a" style="left:1014px;top:229px" width="12" height="12"><path d="M0.8 0.8L11.2 11.2M11.2 0.8L0.8 11.2" stroke="#222" stroke-width="1.1"/></svg>
<!-- tabs -->
<div class="a" style="left:565px;top:260px;width:157px;height:22px;border-top:1px solid #d9d9d9"></div>
<div class="a" style="left:630px;top:261px;width:1px;height:20px;background:#d9d9d9"></div>
<div class="a dt" style="left:579px;top:265px;font-size:10.5px;line-height:14px;color:#111">Settings</div>
<div class="a dt" style="left:642px;top:265px;font-size:10.8px;line-height:14px;color:#111">Input Message</div>
<!-- panel -->
<div class="a" style="left:564px;top:281px;width:472px;height:239px;background:#fff;border:1px solid #dcdcdc"></div>
<div class="a" style="left:722px;top:258px;width:79px;height:27px;background:#fff;border:3px solid #000"></div>
<div class="a" style="left:728px;top:263px;width:67px;height:17px;border:1px dotted #333"></div>
<div class="a dt" style="left:737px;top:265px;font-size:11px;line-height:14px;color:#000">Error Alert</div>
<!-- checkbox -->
<div class="a" style="left:575px;top:293px;width:14px;height:14px;background:#fff;border:1px solid #333"></div>
<svg class="a" style="left:576px;top:294px" width="12" height="12"><path d="M2 6.2L4.8 9L10.2 3" fill="none" stroke="#333" stroke-width="1.2"/></svg>
<div class="a dt" style="left:593px;top:294px;font-size:11.1px;line-height:14px;color:#111"><u>S</u>how error alert after invalid data is entered</div>
<div class="a dt" style="left:576px;top:322px;font-size:10.96px;line-height:14px;color:#111">When user enters invalid data, show this error alert:</div>
<div class="a" style="left:832px;top:328px;width:194px;height:1px;background:#dcdcdc"></div>
<div class="a dt" style="left:587px;top:344px;font-size:11px;line-height:14px;color:#111">St<u>y</u>le:</div>
<div class="a" style="left:587px;top:361px;width:187px;height:23px;background:#fff;border:1px solid #ababab"></div>
<div class="a" style="left:755px;top:362px;width:18px;height:21px;background:#e5e5e5;border-left:1px solid #ccc"></div>
<svg class="a" style="left:759px;top:369px" width="11" height="7"><path d="M0.8 0.8L5.5 5.5L10.2 0.8" fill="none" stroke="#666" stroke-width="1.1"/></svg>
<div class="a dt" style="left:591px;top:366px;font-size:11px;line-height:14px;color:#000">Stop</div>
<div class="a dt" style="left:785px;top:344px;font-size:11px;line-height:14px;color:#111"><u>T</u>itle:</div>
<div class="a" style="left:785px;top:361px;width:241px;height:22px;background:#fff;border:1px solid #ababab"></div>
<div class="a dt" style="left:790px;top:364px;font-size:11.4px;line-height:14px;color:#000">Wrong date</div>
<div class="a dt" style="left:785px;top:388px;font-size:11px;line-height:14px;color:#111"><u>E</u>rror message:</div>
<div class="a" style="left:785px;top:405px;width:241px;height:90px;background:#fff;border:1px solid #ababab"></div>
<div class="a" style="left:1006px;top:408px;width:17px;height:85px;background:#f0f0f0"></div>
<svg class="a" style="left:1010px;top:413px" width="10" height="6"><path d="M0.8 5.2L5 1L9.2 5.2" fill="none" stroke="#bbb" stroke-width="1"/></svg>
<svg class="a" style="left:1010px;top:481px" width="10" height="6"><path d="M0.8 0.8L5 5L9.2 0.8" fill="none" stroke="#bbb" stroke-width="1"/></svg>
<div class="a dt" style="left:790px;top:408px;font-size:10.8px;line-height:14.3px;color:#000">Please enter a date between 03-03-2021 to<br>09-03-2021</div>
<!-- stop icon -->
<svg class="a" style="left:662px;top:432px" width="36" height="36" viewBox="0 0 36 36">
 <defs><radialGradient id="rg" cx="35%" cy="25%" r="80%"><stop offset="0" stop-color="#e0504e"/><stop offset="0.55" stop-color="#b51515"/><stop offset="1" stop-color="#c00a0a"/></radialGradient></defs>
 <circle cx="17.5" cy="17.5" r="15.3" fill="#bdbdbd"/>
 <circle cx="17.5" cy="17.5" r="14" fill="#e9e9e9"/>
 <circle cx="17.5" cy="17.5" r="13.2" fill="url(#rg)"/>
 <path d="M12.5 12.5L22.5 22.5M22.5 12.5L12.5 22.5" stroke="#d9d9d9" stroke-width="3.6" stroke-linecap="square"/>
</svg>
<!-- buttons -->
<div class="a" style="left:564px;top:529px;width:93px;height:25px;background:#e1e1e1;border:1px solid #adadad"></div>
<div class="a dt" style="left:590px;top:535px;font-size:10.6px;line-height:14px;color:#000"><u>C</u>lear All</div>
<div class="a" style="left:837px;top:529px;width:94px;height:25px;background:#e1e1e1;border:2px solid #0078d7"></div>
<div class="a dt" style="left:876px;top:535px;font-size:11px;line-height:14px;color:#000">OK</div>
<div class="a" style="left:943px;top:529px;width:93px;height:25px;background:#e1e1e1;border:1px solid #adadad"></div>
<div class="a dt" style="left:974px;top:535px;font-size:10.2px;line-height:14px;color:#000">Cancel</div>

</body></html>
